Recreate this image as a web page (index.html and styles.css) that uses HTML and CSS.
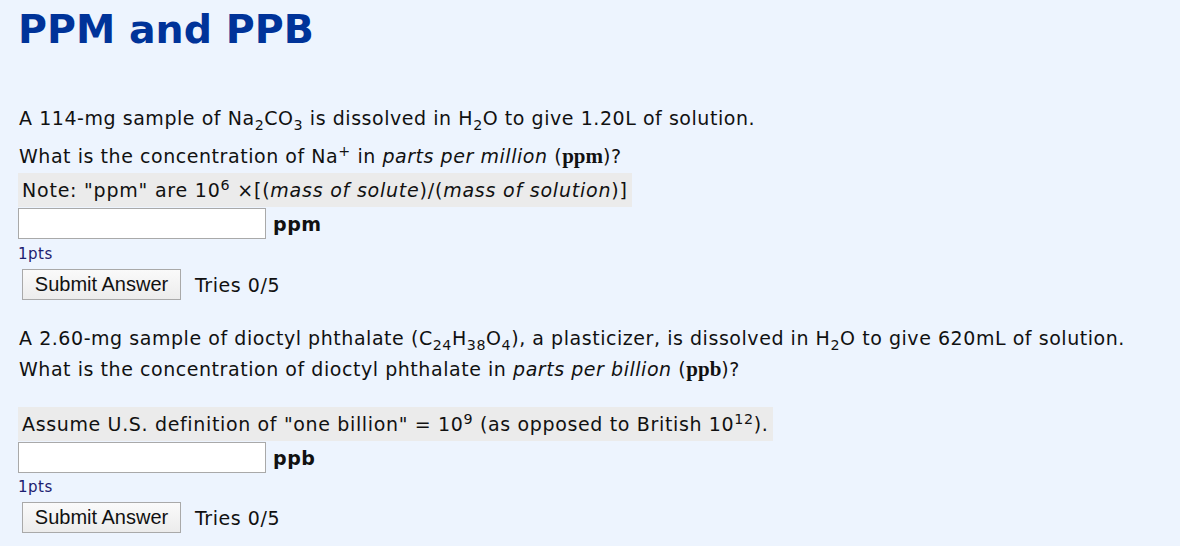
FILE: index.html
```html
<!DOCTYPE html>
<html>
<head>
<meta charset="utf-8">
<link rel="stylesheet" href="styles.css">
</head>
<body>
<h1 class="title">PPM and PPB</h1>

<div class="question q1">
  <p class="line l1">A 114-mg sample of Na<sub>2</sub>CO<sub>3</sub> is dissolved in H<sub>2</sub>O to give 1.20L of solution.</p>
  <p class="line l2">What is the concentration of Na<sup>+</sup> in <i>parts per million</i> (<b class="serif">ppm</b>)?</p>
  <div class="note note1">Note: "ppm" are 10<sup>6</sup> ×[(<i>mass of solute</i>)/(<i>mass of solution</i>)]</div>
  <div class="answer">
    <input class="field" type="text">
    <span class="unit">ppm</span>
  </div>
  <div class="pts">1pts</div>
  <div class="submit">
    <button class="btn">Submit Answer</button>
    <span class="tries">Tries 0/5</span>
  </div>
</div>

<div class="question q2">
  <p class="line l3">A 2.60-mg sample of dioctyl phthalate (C<sub>24</sub>H<sub>38</sub>O<sub>4</sub>), a plasticizer, is dissolved in H<sub>2</sub>O to give 620mL of solution.<br>What is the concentration of dioctyl phthalate in <i>parts per billion</i> (<b class="serif">ppb</b>)?</p>
  <div class="note note2">Assume U.S. definition of "one billion" = 10<sup>9</sup> (as opposed to British 10<sup>12</sup>).</div>
  <div class="answer">
    <input class="field" type="text">
    <span class="unit">ppb</span>
  </div>
  <div class="pts">1pts</div>
  <div class="submit">
    <button class="btn">Submit Answer</button>
    <span class="tries">Tries 0/5</span>
  </div>
</div>
</body>
</html>
```

FILE: styles.css
```css
html, body {
  margin: 0;
  padding: 0;
  background: #edf4fe;
}
body {
  padding: 0 18px;
  font-family: "DejaVu Sans", Verdana, sans-serif;
  font-size: 19px;
  letter-spacing: 0.55px;
  color: #111;
}
.title {
  margin: 0;
  padding-top: 4px;
  font-size: 39.5px;
  letter-spacing: 0;
  line-height: 50px;
  color: #003399;
  font-weight: bold;
  height: 90px;
}
.line {
  margin: 0;
  padding-left: 1px;
}
.l1 { line-height: 38px; margin-top: 5px; }
.l2 { line-height: 30px; margin-top: 4px; }
.l3 { line-height: 31px; }
sub, sup {
  font-size: 75%;
  line-height: 0;
}
.serif {
  font-family: "Liberation Serif", "Times New Roman", serif;
  font-size: 21px;
  letter-spacing: 0;
}
.note {
  display: inline-block;
  background: #ebebeb;
  padding: 0 4px 0 4px;
  line-height: 34px;
}
.note1 { margin-top: 2px; letter-spacing: 0.78px; }
.note2 { margin-top: 22px; letter-spacing: 0.65px; }
.answer {
  display: flex;
  align-items: center;
  height: 32px;
}
.field {
  width: 248px;
  height: 31px;
  box-sizing: border-box;
  border: 1px solid #a9a9a9;
  background: #fff;
  margin: 0;
  padding: 0;
}
.unit {
  font-weight: bold;
  margin-left: 7px;
  margin-top: 1px;
}
.pts {
  font-size: 15px;
  letter-spacing: 0.5px;
  color: #1d2070;
  margin-top: 6px;
  line-height: 18px;
}
.q2 .pts { margin-top: 5px; }
.submit {
  display: flex;
  align-items: center;
  margin-top: 6px;
  margin-left: 4px;
}
.btn {
  font-family: "Liberation Sans", Arial, sans-serif;
  font-size: 20px;
  letter-spacing: 0;
  width: 159px;
  height: 31px;
  border: 1px solid #a9a9a9;
  background: linear-gradient(#fafafa, #ececec);
  color: #111;
  padding: 0;
}
.tries {
  margin-left: 14px;
}
.q2 { margin-top: 23px; }
```
